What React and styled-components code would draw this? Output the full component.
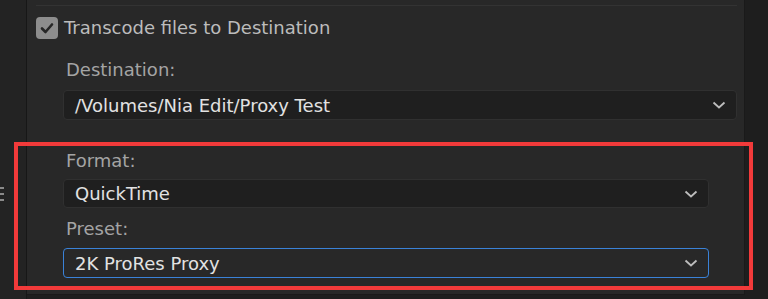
import styled, { createGlobalStyle } from 'styled-components'

const GlobalStyle = createGlobalStyle`
  html, body {
    margin: 0;
    padding: 0;
    background: #1e1e1e;
  }
  * { box-sizing: border-box; }
`;

const Page = styled.div`
  display: flex;
  height: 299px;
  width: 768px;
  background: #1e1e1e;
  overflow: hidden;
  font-family: "DejaVu Sans", "Open Sans", sans-serif;
`;

const SideRail = styled.div`
  width: 27px;
  flex-shrink: 0;
  background: #232323;
  border-right: 1px solid #171717;
  display: flex;
  flex-direction: column;
  padding-top: 187px;
`;

const Grip = styled.div`
  width: 4px;
  display: flex;
  flex-direction: column;
  gap: 4px;

  span {
    height: 2px;
    background: #8a8a8a;
  }
`;

const Panel = styled.div`
  width: 718px;
  height: 295px;
  flex-shrink: 0;
  background: #282828;
  border-right: 1px solid #1a1a1a;
  border-bottom: 1px solid #1a1a1a;
  padding: 5px 7px 0 9px;
  display: flex;
  flex-direction: column;
`;

const Separator = styled.div`
  height: 1px;
  background: #333333;
`;

const CheckRow = styled.label`
  display: flex;
  align-items: center;
  gap: 6px;
  margin-top: 11px;
  height: 22px;
`;

const CheckBox = styled.span`
  width: 22px;
  height: 22px;
  border-radius: 4px;
  background: #8d8d8d;
  display: flex;
  align-items: center;
  justify-content: center;
`;

const CheckText = styled.span`
  color: #bcbcbc;
  font-size: 18px;
  line-height: 22px;
`;

const Fields = styled.div`
  margin-left: 27px;
  display: flex;
  flex-direction: column;
`;

const Label = styled.div`
  color: #a4a4a4;
  font-size: 18px;
  line-height: 22px;
  padding-left: 3px;
  margin-top: ${(p) => p.$top}px;
  margin-bottom: ${(p) => p.$bottom}px;
`;

const Select = styled.div`
  height: ${(p) => p.$height || 30}px;
  width: ${(p) => (p.$narrow ? '646px' : '100%')};
  display: flex;
  align-items: center;
  justify-content: space-between;
  padding: 0 10px 0 11px;
  border-radius: 4px;
  background: ${(p) => (p.$focused ? '#282828' : '#1f1f1f')};
  border: 1px solid ${(p) => (p.$focused ? '#3a82d8' : '#303030')};
  color: #e2e2e2;
  font-size: 18px;
`;

const Highlight = styled.div`
  position: relative;
  display: flex;
  flex-direction: column;
  margin-top: 30px;

  &::before {
    content: '';
    position: absolute;
    top: -8px;
    left: -49px;
    right: -16px;
    bottom: -12px;
    border: 4px solid #f23a3a;
    pointer-events: none;
    z-index: 2;
  }
`;

const Chevron = () => (
  <svg width="14" height="8" viewBox="0 0 14 8">
    <polyline points="1.5,1.5 7,6.5 12.5,1.5" fill="none" stroke="#bdbdbd" strokeWidth="1.8" />
  </svg>
);

const Check = () => (
  <svg width="22" height="22" viewBox="0 0 22 22">
    <path d="M6 11.5 L9.5 15 L16 7.5" fill="none" stroke="#262626" strokeWidth="2.6" strokeLinecap="round" strokeLinejoin="round" />
  </svg>
);

export default function App() {
  return (
    <>
      <GlobalStyle />
      <Page>
        <SideRail>
          <Grip>
            <span />
            <span />
            <span />
          </Grip>
        </SideRail>
        <Panel>
          <Separator />
          <CheckRow>
            <CheckBox>
              <Check />
            </CheckBox>
            <CheckText>Transcode files to Destination</CheckText>
          </CheckRow>
          <Fields>
            <Label $top={20} $bottom={9}>Destination:</Label>
            <Select>
              <span>/Volumes/Nia Edit/Proxy Test</span>
              <Chevron />
            </Select>
            <Highlight>
              <Label $top={0} $bottom={7}>Format:</Label>
              <Select $narrow $height={29}>
                <span>QuickTime</span>
                <Chevron />
              </Select>
              <Label $top={10} $bottom={8}>Preset:</Label>
              <Select $narrow $focused>
                <span>2K ProRes Proxy</span>
                <Chevron />
              </Select>
            </Highlight>
          </Fields>
        </Panel>
      </Page>
    </>
  );
}
